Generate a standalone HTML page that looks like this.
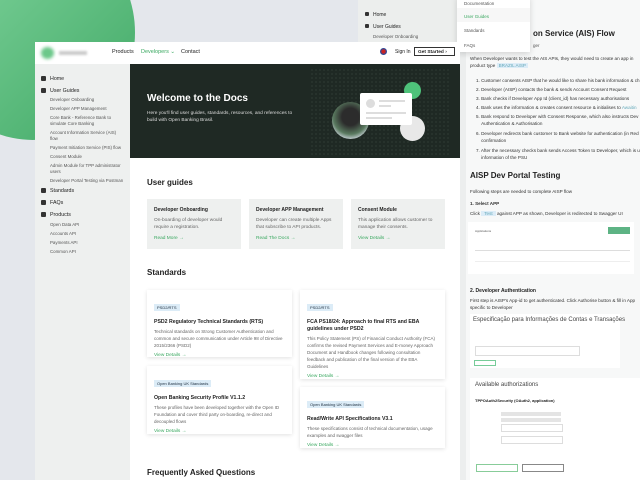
<!DOCTYPE html>
<html><head><meta charset="utf-8"><style>
*{margin:0;padding:0;box-sizing:border-box}
body{width:640px;height:480px;overflow:hidden;background:#e4e7ec;font-family:"Liberation Sans",sans-serif;color:#222;position:relative}
.a{position:absolute}
.g{color:#3aa860}
.s{font-size:4.5px;color:#555}
.card{position:absolute;background:#fff;box-shadow:0 1px 4px rgba(0,0,0,.12)}
.ug{position:absolute;background:#eef0ef;top:199px;width:94px;height:50px;padding:8px 7px}
.ug b{font-size:5px;display:block;margin-bottom:4px}
.ug p{font-size:4.8px;color:#666;line-height:7px}
.ug i{font-style:normal;font-size:4.8px;color:#3aa860;position:absolute;left:7px;top:37px}
.tag{display:inline-block;background:#dcecf7;font-size:4px;padding:1px 3px;color:#234}
.card b{display:block;font-size:5.2px;margin:5px 0 2px;line-height:7px}
.card p{font-size:4.5px;color:#666;line-height:7px}
.card i{font-style:normal;font-size:4.8px;color:#3aa860;display:block;margin-top:4px}
.sb{font-size:4.4px;color:#555;position:absolute;left:50px;line-height:6px}
.sh{font-size:5.3px;color:#222;position:absolute;left:50px}
.ic{position:absolute;left:41px;width:5px;height:5px;background:#333;border-radius:1px}
.rp{font-size:4.6px;color:#333;line-height:6.5px}
.li{position:absolute;left:476px;font-size:4.6px;color:#333;line-height:7px;white-space:nowrap}
</style></head><body>
<div class="a" style="left:-70px;top:-75px;width:205px;height:215px;border-radius:50%;background:linear-gradient(135deg,#86d8a2,#40a865)"></div>
<div class="a" style="left:358px;top:0;width:102px;height:42px;background:#eceeed"></div>
<div class="ic" style="left:365px;top:12px;width:4px;height:4px"></div><div class="a" style="left:373px;top:12px;font-size:5px">Home</div>
<div class="ic" style="left:365px;top:24px;width:4px;height:4px"></div><div class="a" style="left:373px;top:24px;font-size:5px">User Guides</div>
<div class="a s" style="left:373px;top:34px">Developer Onboarding</div>
<div class="a" style="left:460px;top:0;width:180px;height:480px;background:#f7f8f8"></div>
<div class="a" style="left:460px;top:0;width:6px;height:480px;background:#eceeee"></div>
<div class="a" style="left:533px;top:29px;font-size:8px;font-weight:bold">on Service (AIS) Flow</div>
<div class="a s" style="left:533px;top:43px">ger</div>
<div class="a rp" style="left:470px;top:56px;width:170px">When Developer wants to test the AIS APIs, they would need to create an app in product type <span style="background:#dcecf7;color:#6ab;padding:0 2px">BRAZIL AISP</span></div>
<div class="li" style="top:77px">1. Customer consents AISP that he would like to share his bank information &amp; ch</div>
<div class="li" style="top:86px">2. Developer (AISP) contacts the bank &amp; sends Account Consent Request</div>
<div class="li" style="top:95px">3. Bank checks if Developer App Id (client_id) has necessary authorisations</div>
<div class="li" style="top:104px">4. Bank uses the information &amp; creates consent resource &amp; initialises to <span style="color:#6ab">Awaitin</span></div>
<div class="li" style="top:113px">5. Bank respond to Developer with Consent Response, which also instructs Dev<br>&nbsp;&nbsp;&nbsp;&nbsp;Authentication &amp; Authorisation</div>
<div class="li" style="top:130px">6. Developer redirects bank customer to Bank website for authentication (in Red<br>&nbsp;&nbsp;&nbsp;&nbsp;confirmation</div>
<div class="li" style="top:147px">7. After the necessary checks bank sends Access Token to Developer, which is u<br>&nbsp;&nbsp;&nbsp;&nbsp;information of the PSU</div>
<div class="a" style="left:470px;top:171px;font-size:8px;font-weight:bold">AISP Dev Portal Testing</div>
<div class="a rp" style="left:470px;top:189px">Following steps are needed to complete AISP flow</div>
<div class="a rp" style="left:470px;top:201px;font-weight:bold">1. Select APP</div>
<div class="a rp" style="left:470px;top:211px">Click <span style="background:#dcecf7;color:#6ab;padding:0 3px">Test</span> against APP as shown, Developer is redirected to Swagger UI</div>
<div class="a" style="left:468px;top:222px;width:166px;height:52px;background:#fff"></div>
<div class="a" style="left:475px;top:229px;font-size:3px;color:#555">Applications</div>
<div class="a" style="left:608px;top:227px;width:22px;height:7px;background:#5db384"></div>
<div class="a" style="left:475px;top:250px;width:155px;height:12px;border-top:1px solid #ddd;border-bottom:1px solid #eee"></div>
<div class="a" style="left:470px;top:288px;font-size:5px;font-weight:bold">2. Developer Authentication</div>
<div class="a rp" style="left:470px;top:298px;white-space:nowrap">First step is AISP's App-id to get authenticated. Click Authorise button &amp; fill in App<br>specific to Developer</div>
<div class="a" style="left:470px;top:314px;width:150px;height:54px;background:#fff"></div>
<div class="a" style="left:473px;top:317px;font-size:6px;color:#444">Especificação para Informações de Contas e Transações</div>
<div class="a" style="left:475px;top:346px;width:105px;height:10px;border:1px solid #ddd"></div>
<div class="a" style="left:474px;top:360px;width:22px;height:6px;border:1px solid #7c9"></div>
<div class="a" style="left:470px;top:378px;width:170px;height:102px;background:#fff"></div>
<div class="a" style="left:475px;top:382px;font-size:6px;color:#444">Available authorizations</div>
<div class="a" style="left:475px;top:398px;font-size:4px;font-weight:bold">TPPOAuth2Security (OAuth2, application)</div>
<div class="a" style="left:501px;top:412px;width:60px;height:4px;background:#e4e4e4"></div>
<div class="a" style="left:501px;top:418px;width:60px;height:4px;background:#e4e4e4"></div>
<div class="a" style="left:501px;top:424px;width:62px;height:8px;border:1px solid #ddd"></div>
<div class="a" style="left:501px;top:436px;width:62px;height:8px;border:1px solid #ddd"></div>
<div class="a" style="left:476px;top:464px;width:42px;height:8px;border:1px solid #8c9"></div>
<div class="a" style="left:522px;top:464px;width:42px;height:8px;border:1px solid #888"></div>
<div class="a" style="left:457px;top:-4px;width:73px;height:56px;background:#fff;box-shadow:0 2px 6px rgba(0,0,0,.15);font-size:4.5px;color:#555">
<div style="position:absolute;left:7px;top:5px">Documentation</div>
<div style="position:absolute;left:0;top:12px;width:73px;height:14px;background:#f7f7f7"></div>
<div style="position:absolute;left:7px;top:18px;color:#3aa860">User Guides</div>
<div style="position:absolute;left:7px;top:32px">Standards</div>
<div style="position:absolute;left:7px;top:47px">FAQs</div>
</div>
<div class="a" style="left:35px;top:42px;width:425px;height:438px;background:#fff"></div>
<div class="a" style="left:41px;top:47px;width:13px;height:12px;border-radius:50%;background:#6cc88a;filter:blur(1.5px)"></div>
<div class="a" style="left:59px;top:51px;width:28px;height:4px;background:#ccc;filter:blur(1px)"></div>
<div class="a" style="left:112px;top:49px;font-size:5.5px">Products</div>
<div class="a g" style="left:141px;top:49px;font-size:5.5px">Developers ⌄</div>
<div class="a" style="left:181px;top:49px;font-size:5.5px">Contact</div>
<div class="a" style="left:380px;top:48px;width:7px;height:7px;border-radius:50%;background:radial-gradient(#c22 30%,#2a4a9a 60%)"></div>
<div class="a" style="left:395px;top:49px;font-size:5px">Sign In</div>
<div class="a" style="left:414px;top:47px;width:41px;height:9px;border:1px solid #333;font-size:4.8px;font-weight:bold;padding:1.5px 3px">Get Started ›</div>
<div class="a" style="left:35px;top:64px;width:95px;height:416px;background:#eef0ef"></div>
<div class="ic" style="top:76px"></div><div class="sh" style="top:76px">Home</div>
<div class="ic" style="top:88px"></div><div class="sh" style="top:88px">User Guides</div>
<div class="sb" style="top:97px">Developer Onboarding</div>
<div class="sb" style="top:106px">Developer APP Management</div>
<div class="sb" style="top:115px">Core Bank - Reference Bank to<br>simulate Core Banking</div>
<div class="sb" style="top:130px">Account Information Service (AIS)<br>flow</div>
<div class="sb" style="top:145px">Payment Initiation Service (PIS) flow</div>
<div class="sb" style="top:154px">Consent Module</div>
<div class="sb" style="top:163px">Admin Module for TPP administrator<br>users</div>
<div class="sb" style="top:178px">Developer Portal Testing via Postman</div>
<div class="ic" style="top:188px"></div><div class="sh" style="top:188px">Standards</div>
<div class="ic" style="top:200px"></div><div class="sh" style="top:200px">FAQs</div>
<div class="ic" style="top:212px"></div><div class="sh" style="top:212px">Products</div>
<div class="sb" style="top:222px">Open Data API</div>
<div class="sb" style="top:231px">Accounts API</div>
<div class="sb" style="top:240px">Payments API</div>
<div class="sb" style="top:249px">Common API</div>
<div class="a" style="left:130px;top:64px;width:330px;height:94px;background:#1f2924"></div>
<div class="a" style="left:310px;top:68px;width:140px;height:88px;background-image:radial-gradient(#3c4a43 0.6px,transparent 0.8px);background-size:4px 4px"></div>
<div class="a" style="left:147px;top:93px;font-size:10px;font-weight:bold;color:#fff">Welcome to the Docs</div>
<div class="a" style="left:147px;top:110px;font-size:4.8px;color:#ddd;line-height:7px">Here you'll find user guides, standards, resources, and references to<br>build with Open Banking Brasil.</div>
<div class="a" style="left:404px;top:82px;width:17px;height:17px;border-radius:50%;background:#4ec27a"></div>
<div class="a" style="left:332px;top:102px;width:37px;height:37px;border-radius:50%;background:radial-gradient(circle at 50% 40%,#2c2c2c 30%,#5a7a60 60%,#cfd6df 80%)"></div>
<div class="a" style="left:400px;top:116px;width:25px;height:25px;border-radius:50%;background:#e8e8e8"></div>
<div class="a" style="left:360px;top:93px;width:52px;height:32px;background:#fff;border-radius:2px">
<div style="position:absolute;left:6px;top:6px;width:9px;height:9px;border-radius:50%;background:#ddd"></div>
<div style="position:absolute;left:19px;top:7px;width:26px;height:2px;background:#ddd"></div>
<div style="position:absolute;left:19px;top:12px;width:12px;height:2px;background:#ddd"></div>
<div style="position:absolute;left:6px;top:19px;width:40px;height:2px;background:#ddd"></div>
<div style="position:absolute;left:6px;top:24px;width:26px;height:2px;background:#ddd"></div>
</div>
<div class="a" style="left:147px;top:178px;font-size:8px;font-weight:bold">User guides</div>
<div class="ug" style="left:147px"><b>Developer Onboarding</b><p>On-boarding of developer would require a registration.</p><i>Read More →</i></div>
<div class="ug" style="left:249px"><b>Developer APP Management</b><p>Developer can create multiple Apps that subscribe to API products.</p><i>Read The Docs →</i></div>
<div class="ug" style="left:351px"><b>Consent Module</b><p>This application allows customer to manage their consents.</p><i>View Details →</i></div>
<div class="a" style="left:147px;top:268px;font-size:8px;font-weight:bold">Standards</div>
<div class="card" style="left:147px;top:290px;width:145px;height:67px;padding:6px 7px"><span class="tag">PSD2/RTS</span><b>PSD2 Regulatory Technical Standards (RTS)</b><p>Technical standards on Strong Customer Authentication and common and secure communication under Article 98 of Directive 2015/2366 (PSD2)</p><i>View Details →</i></div>
<div class="card" style="left:147px;top:366px;width:145px;height:68px;padding:6px 7px"><span class="tag">Open Banking UK Standards</span><b>Open Banking Security Profile V1.1.2</b><p>These profiles have been developed together with the Open ID Foundation and cover third party on-boarding, re-direct and decoupled flows</p><i>View Details →</i></div>
<div class="card" style="left:300px;top:290px;width:145px;height:89px;padding:6px 7px"><span class="tag">PSD2/RTS</span><b>FCA PS18/24: Approach to final RTS and EBA guidelines under PSD2</b><p>This Policy Statement (PS) of Financial Conduct Authority (FCA) confirms the revised Payment Services and E-money Approach Document and Handbook changes following consultation feedback and publication of the final version of the EBA Guidelines</p><i>View Details →</i></div>
<div class="card" style="left:300px;top:387px;width:145px;height:61px;padding:6px 7px"><span class="tag">Open Banking UK Standards</span><b>Read/Write API Specifications V3.1</b><p>These specifications consist of technical documentation, usage examples and swagger files</p><i>View Details →</i></div>
<div class="a" style="left:147px;top:468px;font-size:8px;font-weight:bold">Frequently Asked Questions</div>
</body></html>
